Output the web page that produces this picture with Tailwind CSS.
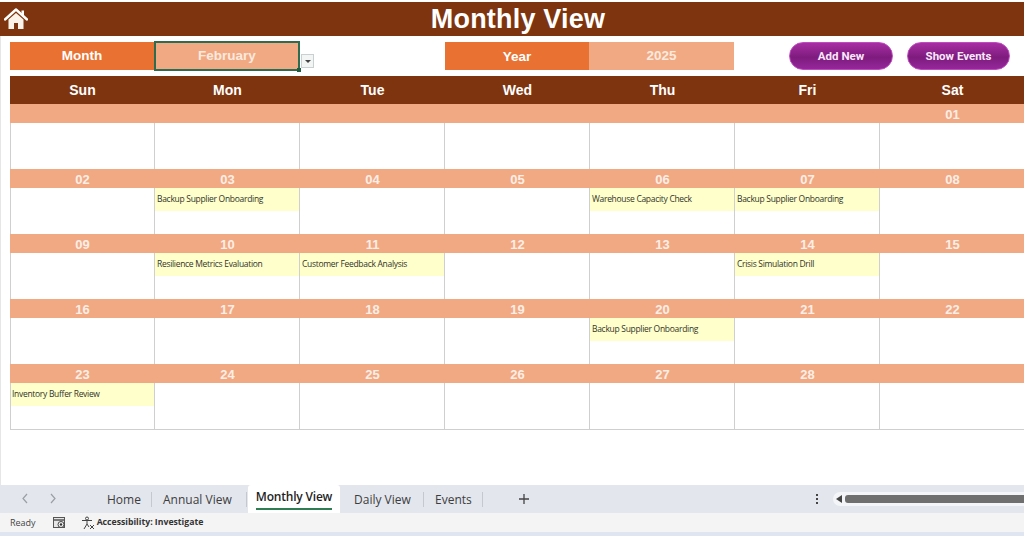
<!DOCTYPE html>
<html><head><meta charset="utf-8"><script src="https://cdn.jsdelivr.net/npm/@tailwindcss/browser@4"></script></head>
<body class="m-0">
<div class="w-[1024px] h-[536px] overflow-hidden bg-white flex flex-col font-['Liberation_Sans',sans-serif]">
  <div class="mt-[2px] h-[34px] shrink-0 bg-[#7e340e] flex items-center relative">
    <svg class="absolute left-[4px] top-[6px] w-[24px] h-[22px]" viewBox="0 0 24 22"><path d="M1 11.5 12 1.5l11 10" fill="none" stroke="#fff" stroke-width="2.4" stroke-linecap="round" stroke-linejoin="round"/><path d="M4.5 11.5 12 5l7.500 6.500V21h-5.500v-6h-4v6H4.500z" fill="#fbf3ea"/><rect x="17.500" y="2.500" width="2.500" height="5" fill="#fff"/></svg>
    <div class="w-full pl-[12px] text-center text-white font-bold text-[27px] leading-none tracking-[0.2px]">Monthly View</div>
  </div>
  <div class="h-[449px] shrink-0 border-l border-[#e6e6e6] flex flex-col">
  <div class="mt-[6px] h-[28px] shrink-0 pl-[9px] flex items-center text-white font-bold text-[13.500px]">
    <div class="w-[144px] h-full bg-[#e97132] flex items-center justify-center pt-[1px]">Month</div>
    <div class="w-[146px] h-[30px] bg-[#f1a983] border-2 border-[#2f6b4f] flex items-center justify-center text-[#fbe9de] relative">February<span class="absolute right-[-3px] bottom-[-3px] w-[4px] h-[4px] bg-[#1f5c40]"></span></div>
    <div class="ml-[1px] mt-[10px] w-[13px] h-[14px] bg-[#f3f5f5] border border-[#c9d0d2] flex items-center justify-center"><span class="w-0 h-0 border-x-[3px] border-x-transparent border-t-[3px] border-t-[#444]"></span></div>
    <div class="ml-[131px] w-[144px] h-full bg-[#e97132] flex items-center justify-center pt-[2px]">Year</div>
    <div class="w-[145px] h-full bg-[#f1a983] flex items-center justify-center text-[#fbe9de] pt-[1px]">2025</div>
    <div class="ml-[55px] w-[104px] h-full rounded-full bg-[linear-gradient(180deg,#a72fa3_0%,#7e1b7e_55%,#95279a_100%)] border border-[#c04bc0] flex items-center justify-center pt-[2px] text-[11.500px] text-[#fbe8fb] font-['Roboto',sans-serif]">Add New</div>
    <div class="ml-[14px] w-[103px] h-full rounded-full bg-[linear-gradient(180deg,#a72fa3_0%,#7e1b7e_55%,#95279a_100%)] border border-[#c04bc0] flex items-center justify-center pt-[1px] text-[11.500px] text-[#fbe8fb] font-['Roboto',sans-serif]">Show Events</div>
  </div>
  <div class="mt-[6px] ml-[9px] w-[1015px] shrink-0">
    <div class="grid grid-cols-[repeat(7,145px)] h-[28px] bg-[#7e340e] text-white font-bold text-[14px] items-center text-center">
      <div>Sun</div><div>Mon</div><div>Tue</div><div>Wed</div><div>Thu</div><div>Fri</div><div>Sat</div>
    </div>
    <div class="grid grid-cols-[repeat(7,145px)] h-[19px] pt-[1px] bg-[#f1a983] text-[#fbeee6] font-bold text-[13px] items-center text-center">
      <div></div><div></div><div></div><div></div><div></div><div></div><div>01</div>
    </div>
    <div class="grid grid-cols-[repeat(7,145px)] h-[46px]">
      <div class="border-l border-r border-[#cfcfcf]"></div><div class="border-r border-[#cfcfcf]"></div><div class="border-r border-[#cfcfcf]"></div><div class="border-r border-[#cfcfcf]"></div><div class="border-r border-[#cfcfcf]"></div><div class="border-r border-[#cfcfcf]"></div><div></div>
    </div>
    <div class="grid grid-cols-[repeat(7,145px)] h-[19px] pt-[1px] bg-[#f1a983] text-[#fbeee6] font-bold text-[13px] items-center text-center">
      <div>02</div><div>03</div><div>04</div><div>05</div><div>06</div><div>07</div><div>08</div>
    </div>
    <div class="grid grid-cols-[repeat(7,145px)] h-[46px] font-['Open_Sans',sans-serif] text-[8.500px] tracking-[-0.3px] text-[#33332a]">
      <div class="border-l border-r border-[#cfcfcf]"></div>
      <div class="border-r border-[#cfcfcf]"><div class="h-[23px] bg-[#ffffcc] pl-[2px] leading-[22px]">Backup Supplier Onboarding</div></div>
      <div class="border-r border-[#cfcfcf]"></div><div class="border-r border-[#cfcfcf]"></div>
      <div class="border-r border-[#cfcfcf]"><div class="h-[23px] bg-[#ffffcc] pl-[2px] leading-[22px]">Warehouse Capacity Check</div></div>
      <div class="border-r border-[#cfcfcf]"><div class="h-[23px] bg-[#ffffcc] pl-[2px] leading-[22px]">Backup Supplier Onboarding</div></div>
      <div></div>
    </div>
    <div class="grid grid-cols-[repeat(7,145px)] h-[19px] pt-[1px] bg-[#f1a983] text-[#fbeee6] font-bold text-[13px] items-center text-center">
      <div>09</div><div>10</div><div>11</div><div>12</div><div>13</div><div>14</div><div>15</div>
    </div>
    <div class="grid grid-cols-[repeat(7,145px)] h-[46px] font-['Open_Sans',sans-serif] text-[8.500px] tracking-[-0.3px] text-[#33332a]">
      <div class="border-l border-r border-[#cfcfcf]"></div>
      <div class="border-r border-[#cfcfcf]"><div class="h-[23px] bg-[#ffffcc] pl-[2px] leading-[22px]">Resilience Metrics Evaluation</div></div>
      <div class="border-r border-[#cfcfcf]"><div class="h-[23px] bg-[#ffffcc] pl-[2px] leading-[22px]">Customer Feedback Analysis</div></div>
      <div class="border-r border-[#cfcfcf]"></div><div class="border-r border-[#cfcfcf]"></div>
      <div class="border-r border-[#cfcfcf]"><div class="h-[23px] bg-[#ffffcc] pl-[2px] leading-[22px]">Crisis Simulation Drill</div></div>
      <div></div>
    </div>
    <div class="grid grid-cols-[repeat(7,145px)] h-[19px] pt-[1px] bg-[#f1a983] text-[#fbeee6] font-bold text-[13px] items-center text-center">
      <div>16</div><div>17</div><div>18</div><div>19</div><div>20</div><div>21</div><div>22</div>
    </div>
    <div class="grid grid-cols-[repeat(7,145px)] h-[46px] font-['Open_Sans',sans-serif] text-[8.500px] tracking-[-0.3px] text-[#33332a]">
      <div class="border-l border-r border-[#cfcfcf]"></div><div class="border-r border-[#cfcfcf]"></div><div class="border-r border-[#cfcfcf]"></div><div class="border-r border-[#cfcfcf]"></div>
      <div class="border-r border-[#cfcfcf]"><div class="h-[23px] bg-[#ffffcc] pl-[2px] leading-[22px]">Backup Supplier Onboarding</div></div>
      <div class="border-r border-[#cfcfcf]"></div>
      <div></div>
    </div>
    <div class="grid grid-cols-[repeat(7,145px)] h-[19px] pt-[1px] bg-[#f1a983] text-[#fbeee6] font-bold text-[13px] items-center text-center">
      <div>23</div><div>24</div><div>25</div><div>26</div><div>27</div><div>28</div><div></div>
    </div>
    <div class="grid grid-cols-[repeat(7,145px)] h-[47px] border-b border-[#cfcfcf] font-['Open_Sans',sans-serif] text-[8.500px] tracking-[-0.3px] text-[#33332a]">
      <div class="border-l border-r border-[#cfcfcf]"><div class="h-[23px] bg-[#ffffcc] pl-[1px] leading-[22px]">Inventory Buffer Review</div></div>
      <div class="border-r border-[#cfcfcf]"></div><div class="border-r border-[#cfcfcf]"></div><div class="border-r border-[#cfcfcf]"></div><div class="border-r border-[#cfcfcf]"></div><div class="border-r border-[#cfcfcf]"></div><div></div>
    </div>
  </div>
  </div>
  <div class="h-[28px] shrink-0 bg-[#e3e6ed] flex items-center font-['Open_Sans',sans-serif] text-[12px] text-[#3d3d3d] relative">
    <svg class="absolute left-[21px] top-[8px] w-[8px] h-[11px]" viewBox="0 0 8 11"><path d="M6 1 2 5.500 6 10" fill="none" stroke="#9a9ea6" stroke-width="1.200"/></svg>
    <svg class="absolute left-[49px] top-[8px] w-[8px] h-[11px]" viewBox="0 0 8 11"><path d="M2 1l4 4.500L2 10" fill="none" stroke="#9a9ea6" stroke-width="1.200"/></svg>
    <div class="ml-[107px] w-[45px] h-[15px] leading-[15px] border-r border-[#c5c8cf]">Home</div>
    <div class="ml-[11px] w-[84px] h-[15px] leading-[15px] border-r border-[#c5c8cf]">Annual View</div>
    <div class="ml-[1px] w-[92px] h-[28px] bg-white rounded-t-[3px] flex justify-center text-[#1f1f1f] font-semibold text-[12px] tracking-[-0.2px]"><span class="mt-[3px] h-[22px] leading-[17px] border-b-2 border-[#2f7d52]">Monthly View</span></div>
    <div class="ml-[14px] w-[70px] h-[15px] leading-[15px] border-r border-[#c5c8cf]">Daily View</div>
    <div class="ml-[11px] w-[48px] h-[15px] leading-[15px] border-r border-[#c5c8cf]">Events</div>
    <svg class="ml-[35px] w-[12px] h-[12px]" viewBox="0 0 12 12"><path d="M6 1v10M1 6h10" stroke="#444" stroke-width="1.300"/></svg>
    <svg class="ml-[285px] w-[4px] h-[12px]" viewBox="0 0 4 12"><rect x="1" y="1" width="2" height="2" fill="#444"/><rect x="1" y="5" width="2" height="2" fill="#444"/><rect x="1" y="9" width="2" height="2" fill="#444"/></svg>
    <div class="ml-[14px] flex-1 h-[14px] bg-[#f4f5f8] rounded-l-full flex items-center pl-[3px]">
      <span class="w-0 h-0 border-y-[4px] border-y-transparent border-r-[6px] border-r-[#444]"></span>
      <span class="ml-[3px] flex-1 h-[8px] rounded-l-[3px] bg-[#6f6f6f]"></span>
    </div>
  </div>
  <div class="h-[19px] shrink-0 bg-[#f4f4f4] flex items-center text-[9px] text-[#444] font-['Open_Sans',sans-serif]">
    <span class="ml-[10px]">Ready</span>
    <svg class="ml-[17px] w-[13px] h-[13px]" viewBox="0 0 13 13"><rect x="0.500" y="1.500" width="11" height="10" fill="#e6e6e6" stroke="#555"/><path d="M1 4h10" stroke="#555" stroke-width="1.500"/><circle cx="8" cy="8.500" r="3" fill="#f4f4f4" stroke="#444"/><circle cx="8" cy="8.500" r="1.200" fill="#333"/></svg>
    <svg class="ml-[15px] w-[14px] h-[14px]" viewBox="0 0 14 14"><circle cx="6" cy="2.500" r="1.500" fill="none" stroke="#444"/><path d="M1 4.500h10M6 5v3M6 8l-3 5M6 8l2 3M9 9l4 4M13 9l-4 4" fill="none" stroke="#444"/></svg>
    <span class="ml-[2px] font-bold text-[8.700px] text-[#333]">Accessibility: Investigate</span>
  </div>
  <div class="flex-1 bg-[#dfe5f1]"></div>
</div>
</body></html>
